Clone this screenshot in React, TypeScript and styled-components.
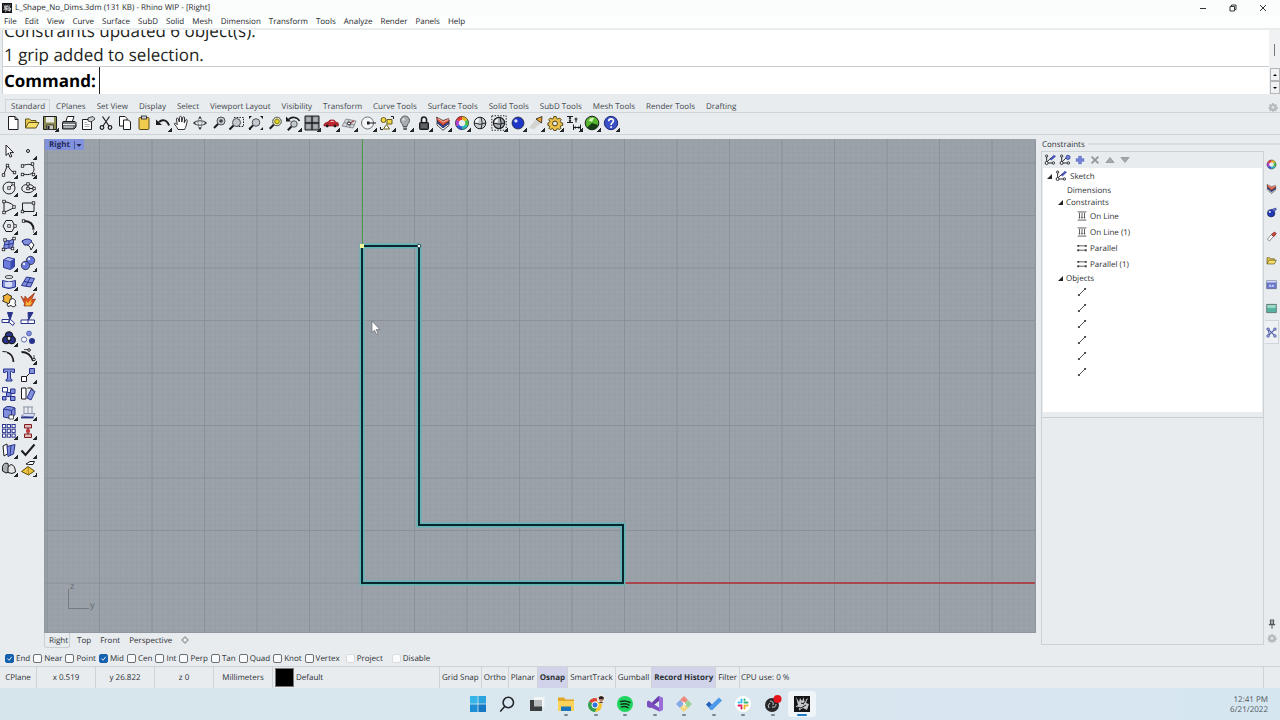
import React from "react";
import styled, { createGlobalStyle } from "styled-components";

const Global = createGlobalStyle`
  * { box-sizing: border-box; }
  html, body { margin: 0; padding: 0; }
  body { background: #e8ecef; font-family: "Open Sans", "Noto Sans", sans-serif; font-size: 8px; color: #2c3034; text-rendering: geometricPrecision; }
  button, input { font: inherit; color: inherit; margin: 0; padding: 0; border: 0; background: none; text-rendering: inherit; }
`;

/* ---------- icon drawings, all on a 16 x 16 grid ---------- */
const K = "#1c1c20";
const B = "#8090dc";
const N = "#2a348c";
const line = { fill: "none", stroke: K, strokeWidth: 1 };
const dot = (x: number, y: number, f = "#fff") => (
  <rect x={x - 1.25} y={y - 1.25} width="2.5" height="2.5" fill={f} stroke={K} strokeWidth=".8" />
);
const lens = (x: number, y: number, r: number, fill = "#c3c9ce") => (
  <>
    <path d={`M${x - r * 0.7} ${y + r * 0.7}L${x - r - 3} ${y + r + 3}`} stroke={K} strokeWidth="2" />
    <circle cx={x} cy={y} r={r} fill={fill} stroke="#4c5156" />
  </>
);
const sphere = (x: number, y: number, r: number, f: string) => (
  <>
    <circle cx={x} cy={y} r={r} fill={f} stroke={K} strokeWidth=".7" />
    <circle cx={x - r * 0.35} cy={y - r * 0.35} r={r * 0.28} fill="#fff" opacity=".85" />
  </>
);
const wheel = (
  <g fill="none" strokeWidth="3.4">
    <path d="M8 3A5 5 0 0 1 12.3 5.5" stroke="#e6b422" />
    <path d="M12.3 5.5A5 5 0 0 1 12.3 10.5" stroke="#4ec04a" />
    <path d="M12.3 10.5A5 5 0 0 1 8 13" stroke="#2cb6b6" />
    <path d="M8 13A5 5 0 0 1 3.7 10.5" stroke="#3056d8" />
    <path d="M3.7 10.5A5 5 0 0 1 3.7 5.5" stroke="#b23ccc" />
    <path d="M3.7 5.5A5 5 0 0 1 8 3" stroke="#e23a34" />
    <circle cx="8" cy="8" r="6.6" stroke={K} strokeWidth=".6" />
  </g>
);
const layers = (
  <>
    <path d="M2 7.500l6 5 6-5v2.800l-6 5-6-5.300z" fill="#fff" stroke={K} strokeWidth=".8" />
    <path d="M2 5l6 5.500L14 6v2.500l-6 4.500-6-5.500z" fill="#3e4aae" stroke={K} strokeWidth=".6" />
    <path d="M1.500 2l6.500 3.500 5.500-2L14.500 6 8 10.500 2 5.500z" fill="#e0563c" stroke={K} strokeWidth=".6" />
    <path d="M3 3.500l5 3.500 5.500-2.500" stroke="#f7b9a8" fill="none" />
  </>
);
const folder = (
  <>
    <path d="M1.500 13V4h4l1.500 1.500h5V8" fill="#e7c94c" stroke="#5f531d" />
    <path d="M1.500 13L4.500 7.500H15L12 13z" fill="#f7df6a" stroke="#5f531d" />
  </>
);
const gearD =
  "M6.8 1.500h2.400l.4 1.900 1.300.6 1.700-1 1.600 1.600-1 1.700.6 1.300 1.900.4v2.400l-1.900.4-.6 1.300 1 .9-1.600 1.600-1.700-1-1.300.6-.4 1.300H6.800l-.4-1.300-1.300-.6-1.700 1-1.600-1.600 1-.9-.6-1.300-1.300-.4V8l1.300-.4.6-1.300-1-1.700 1.600-1.600 1.700 1 1.300-.6z";
const sketch = (
  <g {...line} strokeWidth="1.200">
    <path d="M3.500 3v7M3.500 11L10 4.500M5.500 12H11" />
    <circle cx="3.500" cy="2.800" r="1.500" fill="#fff" />
    <circle cx="3.500" cy="12" r="2" fill="#fff" />
    <circle cx="12.500" cy="12" r="1.600" fill="#fff" />
  </g>
);

const art: Record<string, React.ReactNode> = {
  newFile: <path d="M3.500 1.500H10l3 3v10H3.500zM10 1.500v3h3" fill="#fff" stroke={K} />,
  folder,
  save: (
    <>
      <path d="M1.500 1.500h13v13h-13z" fill="#8b8c52" stroke={K} />
      <path d="M4 2h8v5.500H4z" fill="#e9ebe4" />
      <path d="M4.500 10h7v4.500h-7z" fill="#c9cbc2" stroke={K} strokeWidth=".7" />
      <path d="M5.500 11h2v3h-2z" fill={K} />
    </>
  ),
  print: (
    <>
      <path d="M5 6l1.500-4.500H13L11.500 6" fill="#fff" stroke={K} />
      <path d="M2 6.500h12l1 1V12l-2 2H1.500V8z" fill="#73787e" stroke={K} />
      <path d="M2 9.500h12M3 12h9" stroke="#eef0f2" />
    </>
  ),
  props: (
    <>
      <path d="M2.500 4.500h9v10h-9z" fill="#fff" stroke={K} />
      <path d="M8 3l5-1.500L15 4l-4 3-3-1z" fill="#cdd1d5" stroke={K} strokeWidth=".8" />
      <path d="M4.500 7.500H7M4.500 9.500h5M4.500 11.500h5" stroke="#7d8388" strokeWidth=".7" />
    </>
  ),
  cut: (
    <g {...line} strokeWidth="1.200">
      <path d="M4.500 1.500L11 11M11.500 1.500L5 11" />
      <circle cx="4" cy="12.500" r="1.800" />
      <circle cx="12" cy="12.500" r="1.800" />
    </g>
  ),
  copy: (
    <g fill="#fff" stroke={K}>
      <path d="M2.500 1.500h5.500l2 2v7.500H2.500z" />
      <path d="M6.500 5h5l2 2v7.500h-7z" />
    </g>
  ),
  paste: (
    <>
      <rect x="3" y="2.500" width="10" height="12" rx="1" fill="#f0cb4e" stroke="#5a4a18" />
      <rect x="5.500" y="1" width="5" height="3" fill="#cfd3d6" stroke={K} strokeWidth=".8" />
    </>
  ),
  undo: (
    <>
      <path d="M4 7C7 4 12 4.500 14 10.500" fill="none" stroke={K} strokeWidth="2" />
      <path d="M1 4.500V10h6z" fill={K} />
    </>
  ),
  hand: (
    <path
      d="M5 14.500C4 12 2.500 10.500 1.200 8.800c.6-1.200 2-.6 3 .9L3.500 4c0-1.300 1.600-1.300 1.900 0L6.300 7 6.500 2.300c.2-1.300 1.800-1.300 2 0L8.800 7l1-4.500c.4-1.200 1.900-.8 1.800.5L11.300 7.800 12.600 5c.6-1 1.900-.4 1.600.8-.5 3-1 5.700-2.700 8.700z"
      fill="#fff"
      stroke={K}
      strokeWidth=".9"
    />
  ),
  orbit: (
    <>
      <ellipse cx="8" cy="8" rx="6" ry="2.200" {...line} strokeWidth=".8" />
      <ellipse cx="8" cy="8" rx="2" ry="5" fill="none" stroke="#777" strokeWidth=".8" />
      <path d="M8 1l1.800 2.500H6.200zM8 15l1.800-2.500H6.200zM1 8l2.500-1.800v3.600zM15 8l-2.500-1.800v3.600z" fill="#33373b" />
    </>
  ),
  zoom: (
    <>
      {lens(10, 6, 4)}
      <path d="M8 6h4M10 4v4" stroke={K} />
    </>
  ),
  zoomWin: (
    <>
      <path d="M5 2.500h9.500v9H7" {...line} strokeDasharray="1.500 1.200" />
      {lens(7.500, 7.500, 4)}
    </>
  ),
  zoomExt: (
    <>
      {lens(8, 7.500, 3.800)}
      <path d="M1 4V1h3zM12 1h3v3zM15 12v3h-3zM1 12v3h2z" fill={K} />
    </>
  ),
  zoomSel: (
    <>
      {lens(10, 6.500, 4.300, "#dfe3b8")}
      <circle cx="10" cy="6.500" r="2.300" fill="#e6d51e" stroke="#878018" />
    </>
  ),
  undoView: (
    <>
      {lens(9, 9, 3.200)}
      <path d="M3.500 4.500C7 1 12.500 2 14.500 6" fill="none" stroke={K} strokeWidth="1.600" />
      <path d="M1 1.500V6.500h5z" fill={K} />
    </>
  ),
  fourView: (
    <>
      <path d="M1 1h14v14H1z" fill="#8a9197" stroke={K} />
      <path d="M8 1v14M1 8h14" stroke={K} strokeWidth="1.300" />
      <path d="M2.500 2.500h4v4h-4zM9.500 2.500h4v4h-4zM2.500 9.500h4v4h-4zM9.500 9.500h4v4h-4z" fill="#aab0b5" />
    </>
  ),
  car: (
    <>
      <path d="M1 9.500C2 7.500 4 7.500 5 7L7 5h4l2 2.200 2.300.8v3H1z" fill="#c2262e" stroke="#7c161b" strokeWidth=".7" />
      <path d="M7 7l1-1.200h2.300L11.500 7z" fill="#e7b7b9" />
      <circle cx="4.200" cy="11" r="1.400" fill={K} />
      <circle cx="12" cy="11" r="1.400" fill={K} />
    </>
  ),
  cplane: (
    <>
      <path d="M1 11L5 4l10 2-3 7zM3 7.500l10.500 2.500M8 4.500L5 12M11.500 5.500L8.500 12.500" fill="#d5d8db" stroke="#6e7479" strokeWidth=".7" />
      <path d="M8 8.500L13 6" stroke="#c2262e" />
      <circle cx="8" cy="8.500" r="1.500" fill="#fff" stroke={K} />
    </>
  ),
  setView: (
    <>
      <circle cx="7.500" cy="8" r="6" fill="#f3f5f6" stroke="#6d7277" />
      <path d="M7.500 8H16" stroke={K} />
      <path d="M7 6.500h2.500v3H7z" fill={K} />
    </>
  ),
  group: (
    <>
      <path d="M12 1.500h2.500V4M1.500 12v2.500H4" {...line} />
      <circle cx="4.500" cy="5" r="2.500" fill="#f2d848" stroke="#6a5c18" />
      <path d="M8 4.500h5v4.500H8z" fill="#f2d848" stroke="#6a5c18" />
      <path d="M7.500 9.500l3 4.500h-6z" fill="#fff" stroke="#6a5c18" />
    </>
  ),
  bulb: (
    <>
      <path d="M8 1a4.500 4.500 0 0 1 4.500 4.500C12.500 8 10 9 10 11.500H6C6 9 3.500 8 3.500 5.500A4.500 4.500 0 0 1 8 1z" fill="#a7adb2" stroke="#54595e" />
      <path d="M6 12.500h4V15H6.500z" fill="#62676c" />
      <circle cx="6.500" cy="4.500" r="1.300" fill="#dfe2e4" />
    </>
  ),
  lock: (
    <>
      <path d="M5.500 8V4.500a2.500 2.500 0 0 1 5 0V8" {...line} strokeWidth="1.600" />
      <rect x="3.500" y="7.500" width="9" height="7" rx=".8" fill="#3e4247" stroke={K} />
      <path d="M5 10h6M5 12h6" stroke="#92979c" strokeWidth=".8" />
    </>
  ),
  layers,
  wheel,
  shaded: (
    <>
      <circle cx="8" cy="8" r="5.800" fill="#c7ccd0" stroke={K} />
      <path d="M2.200 8q6 2.600 11.600 0M9 2.200q2.400 6 0 11.600" {...line} strokeWidth=".9" />
      <path d="M3.500 5.500A5 5 0 0 1 7 3.200L6 7.500 3 7.500z" fill="#fff" />
    </>
  ),
  ghosted: (
    <>
      <path d="M.8 .8h14.400v14.400H.8z" {...line} strokeDasharray="1.400 1.400" />
      <circle cx="8" cy="8" r="5.600" fill="#aab0b5" stroke={K} strokeWidth="1.200" />
      <path d="M2.400 8q5.600 2.400 11.200 0M9 2.400q2.400 6 0 11.200" {...line} />
      <path d="M4 5.500L7 3.500 6.500 7.500H3.500z" fill="#fff" />
    </>
  ),
  rendered: sphere(8, 8, 6, "#1d36c8"),
  spot: (
    <>
      <path d="M1 13L9 3l4 5-7 6z" fill="#d3d3cf" />
      <path d="M8 4l6-2.500L13.500 8z" fill="#eda42c" stroke={K} strokeWidth=".8" />
    </>
  ),
  gear: (
    <>
      <path d={gearD} fill="#e8c04a" stroke="#4a3b0c" strokeWidth=".9" />
      <circle cx="8" cy="8.500" r="2.400" fill="#e8ecef" stroke="#4a3b0c" />
    </>
  ),
  dim: (
    <g {...line}>
      <path d="M1 1.500h6M1 7.500h6M4 2v5M7.500 9.500V15M14.500 9.500V15M8 12.500h6.500M10 4.500v3" />
      <path d="M3 3.500L4 2l1 1.500zM3 5.500L4 7l1-1.500zM9.500 11.500l-1.500 1 1.500 1zM12.500 11.500l1.500 1-1.500 1z" fill={K} strokeWidth=".5" />
      <circle cx="10" cy="4" r="1" />
    </g>
  ),
  grass: (
    <>
      <circle cx="8" cy="8" r="6.800" fill="#57b52e" stroke={K} />
      <path d="M8 8L3 12.500A6.300 6.300 0 0 0 14 10z" fill="#173c14" />
      <path d="M4.500 5.500A5 5 0 0 1 10 3L8 7z" fill="#d4f3b4" />
    </>
  ),
  help: (
    <>
      <circle cx="8" cy="8" r="6.700" fill="#3b50c4" stroke="#1d2a78" />
      <path d="M5.700 6.300C5.700 3 10.500 3.200 10.400 6 10.300 7.800 8.100 7.800 8.100 10M8.100 11.300v1.600" fill="none" stroke="#fff" strokeWidth="1.600" />
    </>
  ),
  /* side palette */
  pointer: <path d="M5 2v10.500l2.400-2.300 1.700 4 1.700-.8-1.700-3.800H12.500z" fill="#fff" stroke={K} />,
  point: <circle cx="8" cy="8" r="1.500" {...line} />,
  polyline: (
    <>
      <path d="M2.500 13L6.500 3.500 10 8.500 14 11" {...line} />
      {dot(2.500, 13)}{dot(6.500, 3.500)}{dot(13.500, 10.500)}
    </>
  ),
  curve: (
    <>
      <path d="M2.500 3.500C8 2 13 1 14 6.500 14.500 11 10 14 3 12" {...line} />
      {dot(2.500, 4)}{dot(12.500, 2)}{dot(2.500, 12.500)}{dot(13.500, 12.500)}
    </>
  ),
  circle: (
    <>
      <circle cx="8" cy="8" r="6" {...line} />
      <path d="M8 8l4-4" {...line} />
      {dot(8, 8)}{dot(12.300, 3.700)}
    </>
  ),
  ellipse: (
    <>
      <ellipse cx="8" cy="8.500" rx="6.300" ry="4.200" {...line} />
      <path d="M8 4v4.500h6" {...line} />
      {dot(8, 8.500)}{dot(8, 4)}{dot(14, 8.500)}
    </>
  ),
  arc: (
    <>
      <path d="M3 2.500Q12 4 13.500 8.500L3 13.500z" {...line} />
      {dot(3, 2.500)}{dot(3, 13.500)}{dot(13, 8)}
    </>
  ),
  rectangle: (
    <>
      <path d="M2.500 4h11.500v8.500H2.500z" {...line} />
      {dot(2.500, 12.500)}{dot(13.500, 4)}
    </>
  ),
  polygon: (
    <>
      <path d="M5 2.500h6l3 5.500-3 5.500H5L2 8z" {...line} />
      {dot(8, 8)}{dot(14, 8)}
    </>
  ),
  fillet: (
    <>
      <path d="M2 3h3.500" stroke="#888" />
      <path d="M4 3Q13.500 3 13.500 12" fill="none" stroke={K} strokeWidth="2" />
      <path d="M13.500 11v4" stroke="#888" />
      {dot(3.500, 3)}
    </>
  ),
  srfPts: (
    <>
      <path d="M4 4.500Q9 6 13 2.500L11.500 12.500Q7 11 2.500 13.500z" fill={B} stroke={N} />
      <path d="M8 5v7M3.500 9q5-1 9-1.500" stroke={N} fill="none" />
      {dot(4, 4)}{dot(13, 2.500)}{dot(11.500, 12.500)}{dot(2.500, 13.500)}
    </>
  ),
  srfSweep: (
    <>
      <path d="M2 5Q9 1 14 9L11 14Q10 8 4.500 9z" fill="#fff" stroke={K} />
      <path d="M2 5Q8 1 12 5L8.500 9Q6.500 8 4.500 9z" fill={B} stroke={N} />
    </>
  ),
  box: (
    <>
      <path d="M2.500 5L7 2.500l6.500 1.500v7.500L9.500 14.500l-7-2z" fill="#6c7cdc" stroke={N} />
      <path d="M2.500 5L7 2.500l6.500 1.500-4 2.500z" fill="#b4bef2" stroke={N} strokeWidth=".7" />
      <path d="M9.500 6.500v8l4-3V4z" fill="#3c4ab0" />
    </>
  ),
  spheres: <>{sphere(10.500, 5.500, 4.200, "#6476da")}{sphere(5.500, 10.500, 4.200, "#6476da")}</>,
  loft: (
    <>
      <ellipse cx="8" cy="3" rx="4" ry="1.500" {...line} strokeWidth=".8" />
      <path d="M1.500 6.500Q8 9.500 14.500 6.500V13Q8 16 1.500 13z" fill={B} stroke={N} />
      <path d="M4 8v4.500q4 1 7 0V8z" fill="#d7dcf7" />
    </>
  ),
  patch: (
    <>
      <path d="M1.500 11.500L6.500 3l8 1.500L10.500 13z" fill={B} stroke={N} />
      <path d="M4 7.500l8.500 1.500M10.500 3.500Q8 7 6 12.300" stroke={N} fill="none" />
    </>
  ),
  puzzle: (
    <>
      <path d="M2 4l3-1 1-1.500L8 3l2.500 1-.5 3 2 2-4 3-3-1.500L1.500 9 3 7z" fill="#f0b43a" stroke={K} strokeWidth=".9" />
      <path d="M9 7.500l3-1 2.500 2-.5 3 1 2-3 1.500-2-1.500-3 1-1-2.500 2.500-1z" fill="#fff" stroke={K} strokeWidth=".9" />
    </>
  ),
  explode: (
    <>
      <path d="M1 4l3.500 4L5 4l2.500 3L14.500 1l-3 6.500L15.500 7l-4 7H4L4.500 11.500z" fill="#d9531e" stroke="#8f2f0e" strokeWidth=".7" />
      <path d="M5.500 13.500l.5-4.500 2 2 4-5-1.500 4.500 2-.5-2.500 3.500z" fill="#f7b53c" />
    </>
  ),
  trim: (
    <>
      <path d="M6.500 1.500h5L9 9z" fill={N} stroke={N} />
      <path d="M1 8.500h7v3H1zM9.500 8.500l4 3.500-1.500 2.500L7.500 11z" fill="#fff" stroke={N} />
    </>
  ),
  split: (
    <>
      <path d="M8 1.500h5L8.500 9z" fill={N} stroke={N} />
      <path d="M1 9h13.500v3.500H1z" fill="#fff" stroke={N} />
      <path d="M8 8v4.500" stroke={N} />
    </>
  ),
  booleanU: (
    <g stroke={K} strokeWidth="1.200">
      <circle cx="8" cy="5.500" r="3.700" fill={N} />
      <circle cx="5.300" cy="10" r="3.700" fill={N} />
      <circle cx="10.700" cy="10" r="3.700" fill={N} />
      <circle cx="8" cy="8.500" r="2" fill="#e6e9f8" />
    </g>
  ),
  ungroup: (
    <>
      <circle cx="9" cy="3.500" r="2.400" fill={B} stroke="#5c68b4" />
      <circle cx="4" cy="9.500" r="2.600" fill="#fff" stroke="#5c68b4" />
      <circle cx="12" cy="11" r="3" fill={N} />
    </>
  ),
  extend: (
    <>
      <path d="M1.500 3.500Q6 3 9 6" fill="none" stroke={K} />
      <path d="M6 4.500Q12 6 12.500 14" fill="none" stroke={K} strokeWidth="1.800" />
    </>
  ),
  blend: (
    <>
      <path d="M1.500 4Q10 4 13 13" fill="none" stroke={K} strokeWidth="1.800" />
      <path d="M4 1.500h6M14 7v5" stroke="#555" />
      <circle cx="9" cy="2" r="1.300" fill="#fff" stroke={K} />
      <circle cx="14" cy="11.500" r="1.300" fill="#fff" stroke={K} />
    </>
  ),
  text: <path d="M2.500 2h11v3.500h-2L10.500 4.500H9.500V12l1.500.5v1.500H5v-1.500l1.500-.5V4.500h-1l-1.500 1H2.500z" fill={B} stroke={N} />,
  move: (
    <>
      <path d="M4.500 11.500L11 5" {...line} />
      <path d="M1.500 9.500h5v5h-5z" fill="#fff" stroke={K} />
      <path d="M9.500 1.500h5v5h-5z" fill={B} stroke={N} />
    </>
  ),
  array: (
    <g stroke={N}>
      <path d="M1.500 1.500h5v4.500h-5z" fill="#fff" />
      <path d="M9.500 3h4.500v4.500H9.500zM5.500 6.500h4.500v4H5.500zM9.500 10.500h4.500v4H9.500zM1.500 10.500H5V14H1.500z" fill={B} />
    </g>
  ),
  rotate: (
    <>
      <path d="M1.500 2h4.500v11H1.500z" fill="#fff" stroke={K} />
      <path d="M7 12l4-8.500 4 2L11 14z" fill={B} stroke={N} />
      <path d="M7.500 2q4-1 6 2" {...line} />
    </>
  ),
  solidBox: (
    <>
      <path d="M2.500 5Q5 1.500 9 2.500l5 1.500v6.500L10.500 14.500l-8-1.500z" fill={B} stroke={N} />
      <path d="M2.500 5l8 1.500 3.500-2.500M10.500 6.500v8" stroke={N} fill="none" />
      <path d="M8 11h4.500v4H8z" fill="#fff" stroke={K} strokeWidth=".7" />
    </>
  ),
  project: (
    <>
      <path d="M1.500 12L4 9.500h11l-2 4z" fill="#d7dcf7" stroke="#8b93a5" />
      <path d="M3 3h10M4 3v6.500M8 2.500V9.500M12 3v6.500" fill="none" stroke="#8b93a5" />
      <path d="M1 13.500h12.500" stroke={N} strokeWidth="1.800" />
    </>
  ),
  grid9: (
    <g fill="#fff" stroke={N}>
      {[1.5, 6.2, 11].map((y) => [1.5, 6.2, 11].map((x) => <rect key={`${x}-${y}`} x={x} y={y} width="3.200" height="3.200" />))}
    </g>
  ),
  flow: (
    <>
      <path d="M4.500 1.500h7v3.500h-7zM4.500 11h7v3.500h-7z" fill="#e2b4b4" stroke="#7c1c20" />
      <path d="M8 5v6" stroke="#7c1c20" strokeWidth="1.400" />
      <path d="M6 6.500h4v3H6z" fill="#c43a3c" />
    </>
  ),
  panels: (
    <>
      <path d="M2 4l4-2 1 9.500L3 14z" fill="#fff" stroke={K} />
      <path d="M6 4.500l8-2L12.500 12 7 14.500z" fill={B} stroke={N} />
      <path d="M10 3.500L9 13.500" stroke={N} />
    </>
  ),
  check: <path d="M1.500 8.500L5.500 13 14.500 2.500" fill="none" stroke={K} strokeWidth="2" />,
  shapes: (
    <>
      <path d="M1.500 11V6.500Q3 2 7 3.500l1 8.500-3 1z" fill="#a9aeb3" stroke={K} />
      <path d="M7 12.500V7l3-2.500Q14 5 14.500 12l-3.500 1.500z" fill="#e3e5e7" stroke={K} />
    </>
  ),
  pyramid: (
    <>
      <path d="M1.500 11.500L8 6.500l6.500 4.500-6 4z" fill="#eec33e" stroke="#5f4a10" />
      <path d="M8 7l.5 8" stroke="#a8841e" />
      <path d="M6 4l4-2.500h4.500L13 4.500H8.500z" fill="#fff" stroke={K} />
    </>
  ),
  /* constraints panel */
  sketchPen: (
    <>
      {sketch}
      <path d="M8 7l5-5.500 2.500 1.500L10 8z" fill="#4554c4" stroke={N} strokeWidth=".6" />
    </>
  ),
  sketchDot: (
    <>
      {sketch}
      <circle cx="12" cy="4.500" r="2.800" fill="#7481d6" stroke={N} />
    </>
  ),
  plus: <path d="M6 2h4v4h4v4h-4v4H6v-4H2V6h4z" fill="#7886dc" stroke="#4a58b8" />,
  cross: <path d="M2.500 2.500l11 11M13.500 2.500l-11 11" stroke="#92979b" strokeWidth="3" />,
  up: <path d="M1.500 12L8 4l6.500 8z" fill="#a5aaae" stroke="#7e8388" />,
  down: <path d="M1.500 4L8 12l6.500-8z" fill="#a5aaae" stroke="#7e8388" />,
  onLine: <path d="M1 1.500h14M1 14.500h14M4 3v9M8 3v9M12 3v9M2.800 10.500h2.400M6.800 10.500h2.400M10.800 10.500h2.400" {...line} stroke="#3c4044" strokeWidth="1.300" />,
  parallel: (
    <>
      <path d="M2 4.500h12M2 11.500h12" stroke="#3c4044" strokeWidth="1.300" />
      <path d="M.5 3h3v3h-3zM12.500 3h3v3h-3zM.5 10h3v3h-3zM12.500 10h3v3h-3z" fill="#3c4044" />
    </>
  ),
  segment: (
    <>
      <path d="M3 13L13 3" stroke="#3c4044" strokeWidth="1.500" />
      <path d="M1.500 11.500h3v3h-3zM11.500 1.500h3v3h-3z" fill="#3c4044" />
    </>
  ),
  teapot: (
    <>
      {sphere(7.500, 9, 5.500, "#2038b4")}
      <path d="M8 4L14 1.500 15 4 11 6z" fill="#6c7bdc" stroke={N} />
    </>
  ),
  tag: (
    <>
      <path d="M2 12L9 4l3 2.500L5 14.500z" fill="#fff" stroke="#5b5f63" />
      <path d="M8 5.500L12 1.500l3 2-3.500 4.500z" fill="#d04a3e" stroke="#7c1c20" />
    </>
  ),
  helpWin: (
    <>
      <path d="M1 2.500h14v11.500H1z" fill="#6d7ad0" stroke="#565d82" />
      <path d="M1 2.500h14V5H1z" fill="#d8dcf2" />
      <path d="M4 11l2-3 2 3 2-3 2 3z" fill="#eef0fb" />
    </>
  ),
  display: (
    <>
      <path d="M1 2h14v12H1z" fill="#55b5a0" stroke="#4d565c" />
      <path d="M2 3h12v4H2z" fill="#a4ddc9" />
    </>
  ),
  nodes: (
    <g fill="#fff" stroke="#4a58a8" strokeWidth="1.500">
      <path d="M3 3l10 10M13 3L3 13M3 3l2 9" />
      <circle cx="3" cy="3" r="1.700" /><circle cx="13" cy="3" r="1.700" />
      <circle cx="3" cy="13" r="1.700" /><circle cx="13" cy="13" r="1.700" />
    </g>
  ),
  softGear: (
    <>
      <path d={gearD} fill="#b3b8bc" />
      <circle cx="8" cy="8.500" r="2.400" fill="#dfe3e6" />
    </>
  ),
  pin: <path d="M4.500 1.500h7M5.500 2v6.500h5V2M3 9h10M8 9v6" fill="#a6abaf" stroke="#54585c" strokeWidth="1.700" />,
  addView: <path d="M6 2h4v4h4v4h-4v4H6v-4H2V6h4z" fill="#f4f6f7" stroke="#868b90" strokeWidth="1.800" />,
  rhino: (
    <>
      <path d="M0 0h16v16H0z" fill="#141517" />
      <path d="M2 1l3 5 1-4 2 3 2-4v4l4-3-2 5 3 1-2 6-4-2-4 2.500L5 12l-3.500-1.500L4 9z" fill="#c4c8cb" />
      <path d="M3 11l4 1 5-3M7 7l3 1M12 4l-3 4" stroke="#1d1f21" fill="none" />
    </>
  ),
  /* taskbar */
  windows: (
    <>
      <path d="M0 0h7.600v7.600H0z" fill="#35b5e8" /><path d="M8.400 0H16v7.600H8.400z" fill="#2ba3df" />
      <path d="M0 8.400h7.600V16H0z" fill="#1e8fd4" /><path d="M8.400 8.400H16V16H8.400z" fill="#1678c4" />
    </>
  ),
  search: <path d="M14.500 6.500a5.200 5.200 0 1 1-10.400 0 5.200 5.200 0 0 1 10.400 0zM5.700 10.500L1.200 15.500" fill="none" stroke="#24282b" strokeWidth="1.600" />,
  desktops: (
    <>
      <path d="M5 1h10.500v10H5z" fill="#f3f5f6" />
      <path d="M1 4h12v11H1z" fill="#3a3c3e" />
      <path d="M5 4h8v6.500H5z" fill="#b9bcbe" />
    </>
  ),
  explorer: (
    <>
      <path d="M0 1.500h6l1.500 2H16V14H0z" fill="#e3a728" />
      <path d="M0 5h16v10H0z" fill="#fbd25a" />
      <path d="M3 15v-4.500h10V15z" fill="#1976bd" />
    </>
  ),
  chrome: (
    <>
      <path d="M7 9L1 5.500A7 7 0 0 1 13 5.500H7z" fill="#df4535" />
      <path d="M7 9L1 5.500A7 7 0 0 0 7 16l3.500-5z" fill="#2fa14e" />
      <path d="M7 9h3l-3 7A7 7 0 0 0 13 5.500H8z" fill="#f4c52d" />
      <circle cx="7" cy="9" r="3.100" fill="#2f74dc" stroke="#fff" />
      <circle cx="13" cy="3" r="4.200" fill="#f1e9e4" />
      <path d="M10.500 1.500Q13-1.500 16 1.500L15 4.500 11.500 4z" fill="#2a1f1c" />
      <path d="M11.300 3h3.500v1.800l-1.500 1.200-1.600-.8z" fill="#b87f66" />
      <path d="M10.500 7q2.500-2 5 0z" fill="#26343c" />
    </>
  ),
  spotify: (
    <>
      <circle cx="8" cy="8" r="8" fill="#1ed45f" />
      <path d="M3.500 5.500q5-1.500 9.500 1M4 8.300q4.500-1.200 8 .9M4.500 10.900q3.800-.9 6.500.8" fill="none" stroke="#10331c" strokeWidth="1.500" strokeLinecap="round" />
    </>
  ),
  vs: (
    <>
      <path d="M1.700 5.500L4 7.500 11.500 0 16 2l-4 3L3 12 0 10.500z" fill="#6a3fae" />
      <path d="M1.700 10.500L0 9.500v-4l1.700-1L12.500 12v3.500z" fill="#7b4fbd" />
      <path d="M12 .2L16 2v12l-4 1.800z" fill="#9a6ddb" />
    </>
  ),
  git: (
    <>
      <path d="M8 0l4 4-4 4-4-4z" fill="#ed8a7b" /><path d="M4 4l4 4-4 4-4-4z" fill="#86abe8" />
      <path d="M12 4l4 4-4 4-4-4z" fill="#9bd295" /><path d="M8 8l4 4-4 4-4-4z" fill="#f2d576" />
      <path d="M6.500 5.500L10 9M8 6v6" stroke="#fff" />
    </>
  ),
  todo: (
    <>
      <path d="M0 8.500l3-3 5 5-3 3.500z" fill="#2460b8" />
      <path d="M5 14L2.500 11.500 13 1.500l3 3L6.500 14z" fill="#4d9ae8" />
    </>
  ),
  slack: (
    <>
      <circle cx="8" cy="8" r="8" fill="#fff" />
      <g strokeWidth="2" strokeLinecap="round">
        <path d="M6.500 3.500v3M3.500 6.500h1" stroke="#36c5f0" /><path d="M9.500 6.500h3M9.500 3.500v.5" stroke="#2eb67d" />
        <path d="M9.500 9.500v3M12.500 9.500h-1" stroke="#ecb22e" /><path d="M6.500 9.500h-3M6.500 12.500v-1" stroke="#e01e5a" />
      </g>
    </>
  ),
  obs: (
    <>
      <circle cx="7" cy="9" r="7" fill="#27282a" />
      <path d="M5 5q4 0 3 4M11 8q0 4-4 3M4 12q-2-3 1-5" fill="none" stroke="#c9ccce" strokeWidth="1" />
      <circle cx="12.500" cy="3" r="4" fill="#e5141c" />
    </>
  ),
};

const Glyph = styled.svg<{ $s?: number }>`
  display: block;
  flex: none;
  width: ${(p) => p.$s ?? 16}px;
  height: ${(p) => p.$s ?? 16}px;
  overflow: visible;
`;
const Icon = ({ name, size }: { name: string; size?: number }) => (
  <Glyph viewBox="0 0 16 16" $s={size} aria-hidden="true">{art[name]}</Glyph>
);

/* ---------- frame ---------- */
const Shell = styled.div`
  display: flex;
  flex-direction: column;
  min-height: 100vh;
`;
const TitleBar = styled.header`
  display: flex;
  align-items: center;
  gap: 3px;
  height: 15px;
  padding: 0 10px 0 2px;
  background: #fbfdfd;
  color: #26292c;
`;
const Title = styled.h1`
  flex: 1;
  margin: 0;
  font-size: 8px;
  font-weight: 400;
`;
const WindowButtons = styled.div`
  display: flex;
  gap: 16px;
`;
const WindowButton = styled.button`
  display: grid;
  place-items: center;
  width: 14px;
  height: 14px;
`;
const MenuBar = styled.nav`
  display: flex;
  gap: 8px;
  height: 13px;
  padding: 0 4px;
  background: #fdfefe;
`;
const MenuButton = styled.button`
  line-height: 13px;
  color: #26292c;
`;

/* ---------- command area ---------- */
const CommandArea = styled.section`
  display: flex;
  height: 66px;
  padding-left: 2px;
  border-top: 2px solid #e9ebec;
  background: #e9ecef;
  color: #1d1f21;
  font-size: 17px;
`;
const CommandText = styled.div`
  flex: 1;
  background: #fff;
  border-left: 1px solid #cdd1d8;
`;
const History = styled.div`
  display: flex;
  flex-direction: column;
  justify-content: flex-end;
  gap: 2px;
  height: 37px;
  padding-left: 1px;
  overflow: hidden;
  border-bottom: 1px solid #c9cdd1;
`;
const HistoryLine = styled.p`
  flex: none;
  margin: 0;
  line-height: 22px;
`;
const Prompt = styled.label`
  display: flex;
  height: 27px;
  padding-left: 1px;
  line-height: 27px;
  font-weight: 700;
  color: #000;
`;
const PromptInput = styled.input`
  flex: 1;
  margin-left: 3px;
  border-left: 1px solid #222;
  outline: none;
`;
const Scroll = styled.div`
  display: flex;
  flex-direction: column;
  justify-content: flex-end;
  align-items: center;
  width: 11px;
  background: #f0f1f2;
`;
const Thumb = styled.div`
  width: 1px;
  height: 12px;
  margin-bottom: 12px;
  background: #77797b;
`;
const Spin = styled.button`
  display: grid;
  place-items: center;
  width: 10px;
  height: 13px;
  border: 1px solid #b3b7ba;
`;

/* ---------- tool bars ---------- */
const ToolTabs = styled.div`
  display: flex;
  align-items: flex-end;
  height: 19px;
  padding: 0 2px 0 5px;
  border-bottom: 1px solid #cfd4d9;
`;
const ToolTab = styled.button<{ $on?: boolean }>`
  height: 13px;
  padding: 0 4px 0 5px;
  line-height: 14px;
  color: #43474c;
  border: 1px solid ${(p) => (p.$on ? "#d0d5da" : "transparent")};
  border-bottom: 0;
`;
const Spacer = styled.div`
  flex: 1;
`;
const ToolRow = styled.div`
  padding-left: 4px;
  height: 22px;
  border-bottom: 1px solid #d0d5d9;
`;
const ToolStrip = styled.div`
  display: flex;
  justify-content: space-between;
  align-items: center;
  width: 616px;
  height: 20px;
`;
const Tool = styled.button<{ $more?: boolean }>`
  display: grid;
  place-items: center;
  width: 18px;
  height: 18px;
  background: ${(p) =>
    p.$more ? "linear-gradient(135deg, transparent 50%, #24272a 50%) right bottom / 4px 4px no-repeat" : "none"};
`;
const Work = styled.main`
  display: flex;
  flex: 1;
`;
const Palette = styled.aside`
  width: 44px;
  padding-top: 7px;
`;
const PaletteGrid = styled.div`
  display: grid;
  grid-template-columns: 19px 19px;
  grid-template-rows: repeat(18, 1fr);
  height: 336px;
`;

/* ---------- viewport ---------- */
const Center = styled.div`
  display: flex;
  flex-direction: column;
  flex: 1;
  min-width: 0;
`;
const Viewport = styled.div`
  position: relative;
  flex: 1;
  margin-top: 4px;
  min-height: 400px;
  background: #9ba2a9;
  border: 1px solid #9097a0;
  border-top: 0;
`;
const Canvas = styled.svg`
  position: absolute;
  inset: 0;
  width: 100%;
  height: 100%;
`;
const ViewName = styled.button`
  position: absolute;
  top: 0;
  left: 0;
  display: flex;
  align-items: center;
  gap: 4px;
  height: 11px;
  padding: 0 2px 0 4px;
  background: #8291dc;
  color: #1f2858;
  font-weight: 700;
`;
const ViewTabs = styled.div`
  display: flex;
  align-items: flex-start;
  gap: 2px;
  height: 17px;
`;
const ViewTab = styled.button<{ $on?: boolean }>`
  height: 15px;
  padding: 0 1px 0 4px;
  line-height: 15px;
  border: 1px solid ${(p) => (p.$on ? "#c9ced3" : "transparent")};
  border-top: 0;
  border-radius: 0 0 3px 3px;
`;

/* ---------- right side ---------- */
const Side = styled.aside`
  display: grid;
  grid-template-columns: 223px 16px;
  grid-template-rows: 16px 1fr;
  padding-left: 5px;
  padding-bottom: 5px;
`;
const SideTitle = styled.h2`
  display: flex;
  align-items: center;
  gap: 3px;
  grid-column: 1 / 3;
  margin: 2px 0 0;
  padding-left: 1px;
  font-size: 8px;
  font-weight: 400;
  &::after { content: ""; flex: 1; height: 2px; background: #d9dde1; }
`;
const Panel = styled.section`
  display: flex;
  flex-direction: column;
  border: 1px solid #ccd1d6;
`;
const PanelTools = styled.div`
  display: flex;
  align-items: center;
  gap: 1px;
  height: 16px;
  padding-left: 1px;
`;
const PanelTool = styled.button`
  display: grid;
  place-items: center;
  width: 14px;
  height: 14px;
`;
const Tree = styled.ul`
  height: 244px;
  margin: 0 1px;
  padding: 0;
  list-style: none;
  background: #fff;
`;
const Row = styled.li<{ $indent: number; $short?: boolean }>`
  display: flex;
  align-items: center;
  gap: 3px;
  height: ${(p) => (p.$short ? 12 : 16)}px;
  padding-left: ${(p) => p.$indent}px;
`;
const Splitter = styled.div`
  height: 6px;
  border-bottom: 1px solid #c9ced3;
`;
const SideTabs = styled.div`
  display: flex;
  flex-direction: column;
  padding: 1px 0 0 1px;
`;
const SideTab = styled.button<{ $on?: boolean }>`
  display: grid;
  place-items: center;
  width: 14px;
  height: 24px;
  border: 1px solid ${(p) => (p.$on ? "#d0d5da" : "transparent")};
  border-left: 0;
  background: ${(p) => (p.$on ? "#eff2f5" : "none")};
`;
const SideFoot = styled.button`
  display: grid;
  place-items: center;
  width: 14px;
  height: 14px;
`;

/* ---------- status bars ---------- */
const Snaps = styled.div`
  display: flex;
  align-items: center;
  gap: 3px;
  height: 16px;
  padding-left: 5px;
`;
const Snap = styled.label<{ $soft?: boolean }>`
  display: flex;
  align-items: center;
  gap: 2px;
  padding: 0 ${(p) => (p.$soft ? 3 : 0)}px;
`;
const SnapBox = styled.input<{ $soft?: boolean }>`
  appearance: none;
  width: 9px;
  height: 9px;
  border: 1px solid ${(p) => (p.$soft ? "#d9dde0" : "#6b7075")};
  border-radius: 2px;
  background: #f8fafb;
  &:checked {
    border-color: #1560ae;
    background: #1560ae url("data:image/svg+xml,%3Csvg xmlns='http://www.w3.org/2000/svg' viewBox='0 0 8 8'%3E%3Cpath d='M1.500 4l2 2 3-4' fill='none' stroke='white'/%3E%3C/svg%3E") center / 7px no-repeat;
  }
`;
const Status = styled.footer`
  display: flex;
  height: 22px;
  line-height: 21px;
  border-top: 1px solid #cfd3d7;
`;
const Cell = styled.div<{ $w: number }>`
  width: ${(p) => p.$w}px;
  border-right: 1px solid #cfd3d7;
  text-align: center;
`;
const LayerCell = styled.button`
  display: flex;
  align-items: center;
  gap: 2px;
  width: 167px;
  padding-left: 2px;
  border-right: 1px solid #cfd3d7;
`;
const Swatch = styled.span`
  width: 19px;
  height: 19px;
  background: #000;
  border: 1px solid #777;
`;
const Toggle = styled.button<{ $on?: boolean }>`
  padding: 0 2px;
  border-right: 1px solid #cfd3d7;
  background: ${(p) => (p.$on ? "#d0d3ea" : "none")};
  font-weight: ${(p) => (p.$on ? 700 : 400)};
`;
const Cpu = styled.div`
  flex: 1;
  margin-right: 16px;
  padding-left: 1px;
  border-right: 1px solid #cfd3d7;
`;
const Taskbar = styled.nav`
  display: grid;
  grid-template-columns: 1fr 352px 1fr;
  align-items: center;
  height: 32px;
  background: linear-gradient(90deg, #d6e5ec, #dae7ee 50%, #d9e6f2 80%, #d5e6f0);
`;
const Apps = styled.div`
  display: flex;
  grid-column: 2;
  justify-content: space-between;
`;
const AppButton = styled.button<{ $state?: "open" | "active" }>`
  display: flex;
  flex-direction: column;
  align-items: center;
  gap: 2px;
  width: 28px;
  height: 26px;
  padding-top: 5px;
  border-radius: 3px;
  background: ${(p) => (p.$state === "active" ? "#eff5f8" : "none")};
  &::after {
    content: "";
    width: ${(p) => (p.$state === "active" ? 10 : 4)}px;
    height: 2px;
    border-radius: 1px;
    background: ${(p) => (p.$state === "active" ? "#1f78bd" : p.$state ? "#7d868c" : "transparent")};
  }
`;
const Clock = styled.time`
  padding: 1px 12px 0 0;
  text-align: right;
  line-height: 10px;
  color: #4e565c;
`;

const menus = ["File", "Edit", "View", "Curve", "Surface", "SubD", "Solid", "Mesh", "Dimension", "Transform", "Tools", "Analyze", "Render", "Panels", "Help"];
const tabs = ["Standard", "CPlanes", "Set View", "Display", "Select", "Viewport Layout", "Visibility", "Transform", "Curve Tools", "Surface Tools", "Solid Tools", "SubD Tools", "Mesh Tools", "Render Tools", "Drafting"];
/* a trailing + marks a tool with a fly-out */
const tools = "newFile folder save+ print props cut copy paste undo+ hand orbit zoom zoomWin zoomExt zoomSel undoView+ fourView+ car+ cplane+ setView+ group+ bulb+ lock+ layers+ wheel+ shaded ghosted+ rendered+ spot+ gear+ dim+ grass+ help+".split(" ");
const palette = "pointer point+ polyline+ curve+ circle+ ellipse+ arc+ rectangle+ polygon+ fillet+ srfPts+ srfSweep+ box+ spheres+ loft+ patch+ puzzle explode trim split booleanU+ ungroup extend blend+ text move+ array rotate solidBox+ project+ grid9+ flow+ panels+ check+ shapes+ pyramid+".split(" ");
const sideTabs = ["wheel", "layers", "teapot", "tag", "folder", "helpWin", "display", "nodes"];
const snaps = ["End", "Near", "Point", "Mid", "Cen", "Int", "Perp", "Tan", "Quad", "Knot", "Vertex"];
const toggles: [string, boolean?][] = [["Grid Snap"], ["Ortho"], ["Planar"], ["Osnap", true], ["SmartTrack"], ["Gumball"], ["Record History", true], ["Filter"]];
const apps: [string, ("open" | "active")?][] = [["windows"], ["search"], ["desktops"], ["explorer", "open"], ["chrome", "open"], ["spotify", "open"], ["vs", "open"], ["git", "open"], ["todo", "open"], ["slack", "open"], ["obs", "open"], ["rhino", "active"]];

const ToolButton = ({ id }: { id: string }) => {
  const name = id.replace("+", "");
  return (
    <Tool $more={id.endsWith("+")} aria-label={name}>
      <Icon name={name} />
    </Tool>
  );
};
const Twist = () => (
  <Glyph viewBox="0 0 5 5" $s={5}><path d="M5 0v5H0z" fill="#222" /></Glyph>
);
const outline = "M317 107H374V386H578V444H317Z";

const Drawing = () => (
  <Canvas>
    <defs>
      <pattern id="minor" x="317" y="444" width="5.25" height="5.25" patternUnits="userSpaceOnUse">
        <path d="M0 0H5.250M0 0V5.250" stroke="#858d96" strokeWidth=".6" opacity=".5" />
      </pattern>
      <pattern id="major" x="316.500" y="443.500" width="52.500" height="52.500" patternUnits="userSpaceOnUse">
        <path d="M0 .5H52.500M.5 0V52.500" stroke="#868e96" strokeWidth="1" opacity=".8" />
      </pattern>
    </defs>
    <rect width="100%" height="100%" fill="url(#minor)" />
    <rect width="100%" height="100%" fill="url(#major)" />
    <path d="M317.500 0V107" stroke="#4f9a4f" />
    <rect x="578" y="443" width="100%" height="2" fill="#a8484c" />
    <path d={outline} fill="none" stroke="#5fb4b8" strokeWidth="5" />
    <path d={outline} fill="none" stroke="#08262c" strokeWidth="2" />
    <rect x="315" y="105" width="4" height="4" fill="#f6f79a" />
    <circle cx="374" cy="107" r="1.800" fill="#fff" stroke="#33464c" />
    <path d="M23.500 450V469.500H44" fill="none" stroke="#757c83" />
    <g fill="#656c73" fontSize="9"><text x="25" y="450">z</text><text x="45" y="469">y</text></g>
    <path d="M327 182v11.500l2.500-2.300 1.800 4 1.600-.7-1.700-3.900h3.600z" fill="#fff" stroke="#54595e" strokeWidth=".6" />
  </Canvas>
);

export default function App() {
  return (
    <Shell>
      <Global />
      <TitleBar>
        <Icon name="rhino" size={10} />
        <Title>L_Shape_No_Dims.3dm (131 KB) - Rhino WIP - [Right]</Title>
        <WindowButtons>
          <WindowButton aria-label="Minimize"><Glyph viewBox="0 0 8 8" $s={8}><path d="M1 4.500h6" stroke="#333" /></Glyph></WindowButton>
          <WindowButton aria-label="Restore"><Glyph viewBox="0 0 8 8" $s={8}><path d="M1 2.500h4.500V7H1zM2.500 2.500V1H7v4.500H5.500" fill="none" stroke="#333" /></Glyph></WindowButton>
          <WindowButton aria-label="Close"><Glyph viewBox="0 0 8 8" $s={8}><path d="M1 1l6 6M7 1L1 7" stroke="#333" /></Glyph></WindowButton>
        </WindowButtons>
      </TitleBar>
      <MenuBar>{menus.map((m) => <MenuButton key={m}>{m}</MenuButton>)}</MenuBar>
      <CommandArea>
        <CommandText>
          <History>
            <HistoryLine>Constraints updated 6 object(s).</HistoryLine>
            <HistoryLine>1 grip added to selection.</HistoryLine>
          </History>
          <Prompt>Command:<PromptInput type="text" /></Prompt>
        </CommandText>
        <Scroll>
          <Thumb />
          <Spin aria-label="Previous"><Glyph viewBox="0 0 4 4" $s={4}><path d="M0 3l2-2 2 2z" /></Glyph></Spin>
          <Spin aria-label="Next"><Glyph viewBox="0 0 4 4" $s={4}><path d="M0 1l2 2 2-2z" /></Glyph></Spin>
        </Scroll>
      </CommandArea>
      <ToolTabs>
        {tabs.map((t, i) => <ToolTab key={t} $on={i === 0}>{t}</ToolTab>)}
        <Spacer />
        <Icon name="softGear" size={10} />
      </ToolTabs>
      <ToolRow>
        <ToolStrip>{tools.map((t) => <ToolButton key={t} id={t} />)}</ToolStrip>
      </ToolRow>
      <Work>
        <Palette>
          <PaletteGrid>{palette.map((t) => <ToolButton key={t} id={t} />)}</PaletteGrid>
        </Palette>
        <Center>
          <Viewport>
            <Drawing />
            <ViewName>Right<Glyph viewBox="0 0 8 8" $s={8}><path d="M.5 0v8" stroke="#4a58a0" /><path d="M2.500 3h5L5 6z" fill="#1f2858" /></Glyph></ViewName>
          </Viewport>
          <ViewTabs>
            {["Right", "Top", "Front", "Perspective"].map((v, i) => <ViewTab key={v} $on={i === 0}>{v}</ViewTab>)}
            <ViewTab aria-label="Add view"><Icon name="addView" size={8} /></ViewTab>
          </ViewTabs>
        </Center>
        <Side>
          <SideTitle>Constraints</SideTitle>
          <Panel>
            <PanelTools>
              {["sketchPen", "sketchDot", "plus", "cross", "up", "down"].map((n) => (
                <PanelTool key={n} aria-label={n}><Icon name={n} size={n.startsWith("sketch") ? 12 : 10} /></PanelTool>
              ))}
            </PanelTools>
            <Tree>
              <Row $indent={4}><Twist /><Icon name="sketchPen" size={12} />Sketch</Row>
              <Row $indent={24} $short>Dimensions</Row>
              <Row $indent={15} $short><Twist />Constraints</Row>
              <Row $indent={34}><Icon name="onLine" size={10} />On Line</Row>
              <Row $indent={34}><Icon name="onLine" size={10} />On Line (1)</Row>
              <Row $indent={34}><Icon name="parallel" size={10} />Parallel</Row>
              <Row $indent={34}><Icon name="parallel" size={10} />Parallel (1)</Row>
              <Row $indent={15} $short><Twist />Objects</Row>
              {[1, 2, 3, 4, 5, 6].map((n) => <Row key={n} $indent={34}><Icon name="segment" size={10} /></Row>)}
            </Tree>
            <Splitter />
          </Panel>
          <SideTabs>
            {sideTabs.map((n) => <SideTab key={n} $on={n === "nodes"} aria-label={n}><Icon name={n} size={11} /></SideTab>)}
            <Spacer />
            <SideFoot aria-label="Pin"><Icon name="pin" size={10} /></SideFoot>
            <SideFoot aria-label="Options"><Icon name="softGear" size={10} /></SideFoot>
          </SideTabs>
        </Side>
      </Work>
      <Snaps>
        {snaps.map((s) => <Snap key={s}><SnapBox type="checkbox" defaultChecked={s === "End" || s === "Mid"} />{s}</Snap>)}
        {["Project", "Disable"].map((s) => <Snap key={s} $soft><SnapBox type="checkbox" $soft />{s}</Snap>)}
      </Snaps>
      <Status>
        <Cell $w={37}>CPlane</Cell>
        <Cell $w={59}>x 0.519</Cell>
        <Cell $w={59}>y 26.822</Cell>
        <Cell $w={59}>z 0</Cell>
        <Cell $w={59}>Millimeters</Cell>
        <LayerCell><Swatch />Default</LayerCell>
        {toggles.map(([t, on]) => <Toggle key={t} $on={on}>{t}</Toggle>)}
        <Cpu>CPU use: 0 %</Cpu>
      </Status>
      <Taskbar>
        <Apps>{apps.map(([n, s]) => <AppButton key={n} $state={s} aria-label={n}><Icon name={n} size={16} /></AppButton>)}</Apps>
        <Clock>12:41 PM<br />6/21/2022</Clock>
      </Taskbar>
    </Shell>
  );
}
